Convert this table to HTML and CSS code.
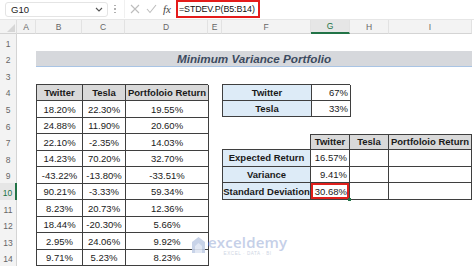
FILE: index.html
```html
<!DOCTYPE html>
<html>
<head>
<meta charset="utf-8">
<link rel="stylesheet" href="styles.css">
</head>
<body>
<div class="app">
  <div class="fbar">
    <div class="namebox"><span>G10</span>
      <svg width="8" height="6" viewBox="0 0 8 6"><polyline points="1,1 4,4 7,1" fill="none" stroke="#555" stroke-width="1.1"/></svg>
    </div>
    <div class="vdots"><i></i><i></i><i></i></div>
    <div class="fbtns">
      <svg width="10" height="10" viewBox="0 0 10 10"><path d="M1 1 L9 9 M9 1 L1 9" stroke="#bdbdbd" stroke-width="1.1"/></svg>
      <svg width="11" height="10" viewBox="0 0 11 10"><polyline points="1,5 4,8.5 10,1" fill="none" stroke="#bdbdbd" stroke-width="1.1"/></svg>
      <span class="fx">fx</span>
    </div>
    <div class="formula">=STDEV.P(B5:B14)</div>
    <div class="frest"></div>
  </div>

  <div class="sheet">
    <div class="corner"><svg width="8" height="8" viewBox="0 0 8 8"><polygon points="8,0 8,8 0,8" fill="#d6d6d6"/></svg></div>
    <div class="ch">A</div>
    <div class="ch">B</div>
    <div class="ch">C</div>
    <div class="ch">D</div>
    <div class="ch">E</div>
    <div class="ch">F</div>
    <div class="ch ch-sel">G</div>
    <div class="ch">H</div>
    <div class="ch">I</div>

    <div class="rh r1">1</div>
    <div class="rh r2">2</div>
    <div class="rh r3">3</div>
    <div class="rh r4">4</div>
    <div class="rh r5">5</div>
    <div class="rh r6">6</div>
    <div class="rh r7">7</div>
    <div class="rh r8">8</div>
    <div class="rh r9">9</div>
    <div class="rh r10 rh-sel">10</div>
    <div class="rh r11">11</div>
    <div class="rh r12">12</div>
    <div class="rh r13">13</div>
    <div class="rh r14">14</div>

    <div class="title">Minimum Variance Portfolio</div>

    <div class="ltable">
      <div class="c hd">Twitter</div><div class="c hd">Tesla</div><div class="c hd">Portfoloio Return</div>
      <div class="c">18.20%</div><div class="c">22.30%</div><div class="c">19.55%</div>
      <div class="c">24.88%</div><div class="c">11.90%</div><div class="c">20.60%</div>
      <div class="c">22.10%</div><div class="c">-2.35%</div><div class="c">14.03%</div>
      <div class="c">14.23%</div><div class="c">70.20%</div><div class="c">32.70%</div>
      <div class="c">-43.22%</div><div class="c">-13.80%</div><div class="c">-33.51%</div>
      <div class="c">90.21%</div><div class="c">-3.33%</div><div class="c">59.34%</div>
      <div class="c">8.23%</div><div class="c">20.73%</div><div class="c">12.36%</div>
      <div class="c">18.44%</div><div class="c">-20.30%</div><div class="c">5.66%</div>
      <div class="c">2.95%</div><div class="c">24.06%</div><div class="c">9.92%</div>
      <div class="c">9.71%</div><div class="c">5.23%</div><div class="c">8.23%</div>
    </div>

    <div class="wtable">
      <div class="c lb">Twitter</div><div class="c num">67%</div>
      <div class="c lb">Tesla</div><div class="c num">33%</div>
    </div>

    <div class="stable">
      <div class="c blank"></div>
      <div class="c hd top lft">Twitter</div><div class="c hd top">Tesla</div><div class="c hd top">Portfoloio Return</div>
      <div class="c lb lft">Expected Return</div><div class="c num">16.57%</div><div class="c"></div><div class="c"></div>
      <div class="c lb lft">Variance</div><div class="c num">9.41%</div><div class="c"></div><div class="c"></div>
      <div class="c lb lft">Standard Deviation</div><div class="c num active">30.68%</div><div class="c"></div><div class="c"></div>
    </div>
  </div>

  <div class="watermark">
    <svg width="13" height="16" viewBox="0 0 13 16"><polygon points="6.5,0 13,5 13,16 0,16 0,5" fill="#c3cfe6"/><polygon points="6.5,6 10,9 10,16 3,16 3,9" fill="#dfe6f3"/></svg>
    <div class="wm-text"><span class="wm-big">exceldemy</span><span class="wm-small">EXCEL · DATA · BI</span></div>
  </div>
</div>
</body>
</html>
```

FILE: styles.css
```css
* { box-sizing: border-box; margin: 0; padding: 0; }
html, body { margin: 0; background: #fff; }
body { width: 474px; height: 268px; overflow: hidden; font-family: "Liberation Sans", Arial, sans-serif; }
.app { position: relative; width: 474px; height: 268px; }

.fbar { height: 20px; display: flex; align-items: flex-start; background: #fff; border-bottom: 1px solid #e6e6e6; }
.namebox { margin: 2px 0 0 5px; width: 103px; height: 15px; border: 1px solid #e4e4e4; border-radius: 3px; display: flex; align-items: center; justify-content: space-between; padding: 0 4px 0 5px; font-size: 9.5px; color: #222; }
.vdots { width: 14px; height: 18px; display: flex; flex-direction: column; align-items: center; justify-content: center; gap: 2px; }
.vdots i { display: block; width: 1.5px; height: 1.5px; background: #b0b0b0; }
.fbtns { width: 52px; height: 18px; margin-left: 2px; display: flex; align-items: center; gap: 6px; padding-left: 5px; border-left: 1px solid #f0f0f0; }
.fx { font-family: "Liberation Serif", serif; font-style: italic; font-size: 11px; color: #444; }
.formula { width: 84px; height: 18px; border: 2px solid #e41b1b; font-size: 8.9px; letter-spacing: -0.1px; color: #111; display: flex; align-items: center; padding-left: 1px; white-space: nowrap; overflow: hidden; }
.frest { flex: 1; }

.sheet {
  display: grid;
  grid-template-columns: 17px 19px 46px 43px 83px 14px 89px 39px 39px 83px 2px;
  grid-template-rows: 14px repeat(14, 16.6px);
  font-size: 9.5px;
  color: #1a1a1a;
}
.corner { grid-column: 1; grid-row: 1; background: #f3f3f3; border-right: 1px solid #dedede; border-bottom: 1px solid #d4d4d4; display: flex; align-items: flex-end; justify-content: flex-end; padding: 0 1px 1px 0; }
.ch { grid-row: 1; background: #f3f3f3; border-right: 1px solid #e2e2e2; border-bottom: 1px solid #d4d4d4; color: #666; font-size: 8.5px; display: flex; align-items: center; justify-content: center; }
.ch-sel { background: #e6e6e6; border-bottom: 2px solid #217346; color: #217346; }
.rh { grid-column: 1; background: #f3f3f3; border-right: 1px solid #d4d4d4; color: #666; font-size: 8.5px; display: flex; align-items: flex-end; justify-content: center; padding-bottom: 2px; }
.rh-sel { background: #e6e6e6; border-right: 2px solid #217346; color: #217346; }
.r1 { grid-row: 2; } .r2 { grid-row: 3; } .r3 { grid-row: 4; } .r4 { grid-row: 5; } .r5 { grid-row: 6; }
.r6 { grid-row: 7; } .r7 { grid-row: 8; } .r8 { grid-row: 9; } .r9 { grid-row: 10; } .r10 { grid-row: 11; }
.r11 { grid-row: 12; } .r12 { grid-row: 13; } .r13 { grid-row: 14; } .r14 { grid-row: 15; }

.title { grid-column: 3 / 11; grid-row: 3; background: #d6d8dc; border-bottom: 1px solid #a9c4e4; color: #3d4b5f; font-weight: bold; font-style: italic; font-size: 11.7px; display: flex; align-items: center; justify-content: center; }

.c { display: flex; align-items: center; justify-content: center; border-right: 1px solid #3f3f3f; border-bottom: 1px solid #3f3f3f; white-space: nowrap; }
.hd { background: #d9d9d9; font-weight: bold; }
.lb { background: #ddebf7; font-weight: bold; }
.num { justify-content: flex-end; padding-right: 2px; }

.ltable { grid-column: 3 / 6; grid-row: 5 / 16; display: grid; grid-template-columns: 46px 43px 83px; grid-template-rows: repeat(11, 1fr); border-left: 1px solid #3f3f3f; border-top: 1px solid #3f3f3f; }
.wtable { grid-column: 7 / 9; grid-row: 5 / 7; display: grid; grid-template-columns: 89px 39px; grid-template-rows: repeat(2, 1fr); border-left: 1px solid #3f3f3f; border-top: 1px solid #3f3f3f; }
.stable { grid-column: 7 / 11; grid-row: 8 / 12; display: grid; grid-template-columns: 89px 39px 39px 83px; grid-template-rows: repeat(4, 1fr); }
.stable .blank { border-right: 1px solid #3f3f3f; border-bottom: 1px solid #3f3f3f; }
.stable .top { border-top: 1px solid #3f3f3f; }
.stable .lft { border-left: 1px solid #3f3f3f; }
.stable .hd.top.lft { border-left: none; }
.active { box-shadow: inset 0 0 0 2px #e0201c; position: relative; }
.active::after { content: ""; position: absolute; right: -2px; bottom: -2px; width: 3px; height: 3px; background: #217346; }

.watermark { position: absolute; left: 192px; top: 237px; display: flex; align-items: flex-start; gap: 3px; opacity: 0.9; }
.wm-text { display: flex; flex-direction: column; align-items: center; margin-top: -3px; }
.wm-big { font-family: "Open Sans", "Liberation Sans", sans-serif; font-size: 15px; font-weight: 600; color: #bfcbe6; letter-spacing: 0.2px; line-height: 17px; }
.wm-small { font-size: 4.5px; color: #c9d1e2; letter-spacing: 0.6px; line-height: 5px; }
```
